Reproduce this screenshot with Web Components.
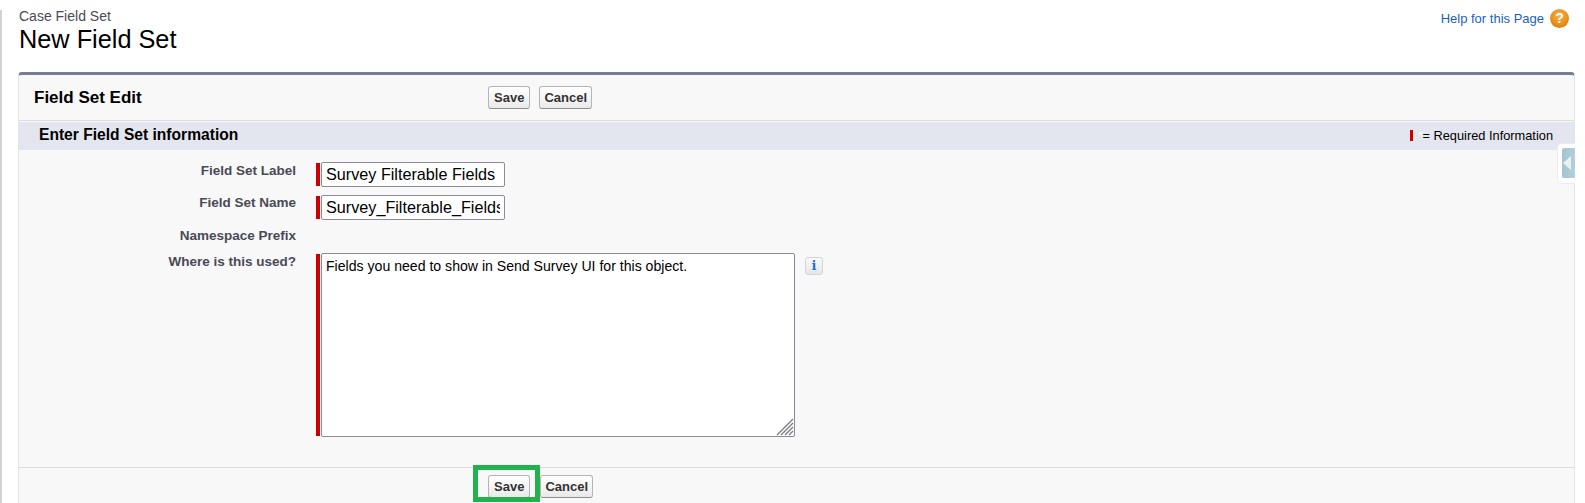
<!DOCTYPE html>
<html lang="en">
<head>
<meta charset="utf-8">
<title>New Field Set</title>
<style>
  html, body { margin: 0; height: 100%; overflow: hidden; background: #fff; }
  body { font-family: "Liberation Sans", Arial, sans-serif; }
</style>
</head>
<body>
<sf-page>
  <sf-page-header eyebrow="Case Field Set" heading="New Field Set" help="Help for this Page"></sf-page-header>
  <sf-panel>
    <sf-button-bar heading="Field Set Edit">
      <sf-button>Save</sf-button>
      <sf-button tight>Cancel</sf-button>
    </sf-button-bar>
    <sf-section-head heading="Enter Field Set information"></sf-section-head>
    <sf-form-body>
      <sf-field label="Field Set Label" required style="--label-top: 1px">
        <sf-text-input value="Survey Filterable Fields"></sf-text-input>
      </sf-field>
      <sf-field label="Field Set Name" required>
        <sf-text-input value="Survey_Filterable_Fields"></sf-text-input>
      </sf-field>
      <sf-field label="Namespace Prefix"></sf-field>
      <sf-field label="Where is this used?" required style="--label-top: 1px">
        <sf-text-area value="Fields you need to show in Send Survey UI for this object."></sf-text-area>
        <sf-info-button slot="after"></sf-info-button>
      </sf-field>
    </sf-form-body>
    <sf-button-bar footer>
      <sf-highlight><sf-button>Save</sf-button></sf-highlight>
      <sf-button tight>Cancel</sf-button>
    </sf-button-bar>
    <sf-flap slot="overlay"></sf-flap>
  </sf-panel>
</sf-page>

<script>
// petit helper pour eviter de repeter attachShadow partout
class SfBase extends HTMLElement {
    constructor() {
        super();
        this.attachShadow({ mode: 'open' });
    }
    connectedCallback() {
        this.render();
    }
}

class SfPage extends SfBase {
    render() {
        this.shadowRoot.innerHTML = `
            <style>
                :host { display: flex; height: 503px; box-sizing: border-box; }
                .strip { width: 2px; margin-top: 10px; background: #d2d2d2; flex: none; }
                .content { flex: 1; min-width: 0; display: flex; flex-direction: column; padding: 0 10px 0 16px; }
            </style>
            <div class="strip"></div>
            <div class="content"><slot></slot></div>
        `;
    }
}

class SfPageHeader extends SfBase {
    render() {
        this.shadowRoot.innerHTML = `
            <style>
                :host { display: flex; justify-content: space-between; align-items: flex-start; height: 72px; flex: none; padding-left: 1px; }
                .eyebrow { font-size: 14px; line-height: 15px; color: #4a4a56; padding-top: 9px; }
                h1 { margin: 0; font-size: 25.3px; font-weight: normal; line-height: 30px; color: #000; }
                .help { display: flex; align-items: center; gap: 6px; padding: 9px 6px 0 0; font-size: 13px; color: #1b5fbe; }
                .qmark {
                    width: 19px; height: 19px; border-radius: 50%;
                    background: radial-gradient(circle at 50% 35%, #f6b34a, #e58a14 65%, #b96a0c);
                    color: #fff; font-size: 14px; font-weight: bold; line-height: 19px; text-align: center;
                }
            </style>
            <div>
                <div class="eyebrow">${this.getAttribute('eyebrow')}</div>
                <h1>${this.getAttribute('heading')}</h1>
            </div>
            <div class="help"><span>${this.getAttribute('help')}</span><span class="qmark">?</span></div>
        `;
    }
}

class SfPanel extends SfBase {
    render() {
        this.shadowRoot.innerHTML = `
            <style>
                :host {
                    display: block; position: relative; flex: 1; box-sizing: border-box;
                    background: #f8f8f8;
                    border: 1px solid #e4e4e4; border-top: 3px solid #747e96; border-bottom: 0;
                    border-radius: 4px 4px 0 0;
                }
            </style>
            <slot></slot>
            <slot name="overlay"></slot>
        `;
    }
}

class SfButtonBar extends SfBase {
    render() {
        const heading = this.getAttribute('heading') || '';
        this.shadowRoot.innerHTML = `
            <style>
                :host { display: flex; align-items: center; height: 45px; box-sizing: border-box; padding-left: 15px; }
                :host([footer]) { height: auto; padding-top: 7px; border-top: 1px solid #dcdcdc; align-items: flex-start; }
                h2 { margin: 0; width: 454px; flex: none; font-size: 17px; font-weight: bold; color: #000; }
                .buttons { display: flex; gap: 9px; }
                :host([footer]) .buttons { gap: 10px; }
            </style>
            <h2>${heading}</h2>
            <div class="buttons"><slot></slot></div>
        `;
    }
}

class SfButton extends SfBase {
    render() {
        this.shadowRoot.innerHTML = `
            <style>
                :host { display: block; }
                button {
                    display: block; height: 23px; padding: 0 5px; margin: 0;
                    font: bold 13px "Liberation Sans", Arial, sans-serif; color: #333;
                    background: linear-gradient(#ffffff, #f3f3f3 60%, #e9e9e9);
                    border: 1px solid #b5b5b5; border-bottom-color: #8f8f8f; border-radius: 3px;
                }
                :host([tight]) button { padding: 0 4px; }
            </style>
            <button type="button"><slot></slot></button>
        `;
    }
}

class SfHighlight extends SfBase {
    render() {
        this.shadowRoot.innerHTML = `
            <style>
                :host { display: block; position: relative; }
                .box {
                    position: absolute; left: -15px; top: -10px; width: 67px; height: 37px;
                    box-sizing: border-box; border: 5px solid #22b14c; pointer-events: none;
                }
            </style>
            <slot></slot>
            <div class="box"></div>
        `;
    }
}

class SfSectionHead extends SfBase {
    render() {
        this.shadowRoot.innerHTML = `
            <style>
                :host {
                    display: flex; justify-content: space-between; align-items: center;
                    height: 28px; margin-top: 2px; padding: 0 21px 2px 20px; background: #e3e6ef;
                    position: relative; box-sizing: border-box;
                }
                :host::before { content: ""; position: absolute; left: 0; right: 0; top: -2px; height: 1px; background: #dcdcdc; }
                h3 { margin: 0; font-size: 15.6px; font-weight: bold; color: #000; }
                .legend { display: flex; align-items: center; font-size: 12.8px; color: #000; }
                .bar { width: 3px; height: 11px; background: #c00; margin-right: 5px; }
                .star { color: #fff; font-size: 9px; width: 4px; }
            </style>
            <h3>${this.getAttribute('heading')}</h3>
            <div class="legend"><span class="bar"></span><span class="star">*</span><span>= Required Information</span></div>
        `;
    }
}

class SfFormBody extends SfBase {
    render() {
        this.shadowRoot.innerHTML = `
            <style>
                :host { display: flex; flex-direction: column; height: 317px; box-sizing: border-box; padding-top: 12px; }
            </style>
            <slot></slot>
        `;
    }
}

class SfField extends SfBase {
    render() {
        const required = this.hasAttribute('required');
        this.shadowRoot.innerHTML = `
            <style>
                :host { display: grid; grid-template-columns: 278px auto 1fr; margin-bottom: 8px; min-height: 17px; }
                .label { text-align: right; font-size: 13.5px; font-weight: bold; color: #4a4a56; line-height: 15px; padding: var(--label-top, 0) 1px 0 0; }
                .control { display: flex; gap: 1px; margin-left: 19px; }
                .req { width: 4px; margin: 1px 0; background: ${required ? '#c00' : 'transparent'}; flex: none; }
                .after { padding: 3px 0 0 10px; }
            </style>
            <div class="label">${this.getAttribute('label')}</div>
            <div class="control"><span class="req"></span><slot></slot></div>
            <div class="after"><slot name="after"></slot></div>
        `;
    }
}

class SfTextInput extends SfBase {
    render() {
        this.shadowRoot.innerHTML = `
            <style>
                :host { display: block; }
                input {
                    display: block; width: 184px; height: 25px; box-sizing: border-box; margin: 0; padding: 1px 4px;
                    font: 16.2px "Liberation Sans", Arial, sans-serif; color: #000;
                    background: #fff; border: 1px solid #8b8b99; border-radius: 2px; outline: none;
                }
            </style>
            <input type="text" value="${this.getAttribute('value')}">
        `;
    }
}

class SfTextArea extends SfBase {
    render() {
        this.shadowRoot.innerHTML = `
            <style>
                :host { display: block; position: relative; }
                textarea {
                    display: block; width: 474px; height: 184px; box-sizing: border-box; margin: 0; padding: 4px 4px;
                    font: 14.1px "Liberation Sans", Arial, sans-serif; color: #000;
                    background: #fff; border: 1px solid #8b8b99; border-radius: 2px; outline: none; resize: none;
                }
                svg { position: absolute; right: 1px; bottom: 1px; }
            </style>
            <textarea>${this.getAttribute('value')}</textarea>
            <svg width="18" height="18" viewBox="0 0 18 18" stroke="#7d7d86" stroke-width="1.4">
                <path d="M1 17 17 1M5 17 17 5M9 17 17 9M13 17 17 13"/>
            </svg>
        `;
    }
}

class SfInfoButton extends SfBase {
    render() {
        this.shadowRoot.innerHTML = `
            <style>
                :host { display: inline-block; }
                div {
                    width: 18px; height: 18px; box-sizing: border-box; border-radius: 3px;
                    border: 1px solid #d5d5d8; background: linear-gradient(#fafafa, #e6e6ea);
                    font: bold 13px/16px "DejaVu Serif", "Liberation Serif", serif; color: #1e73c9; text-align: center;
                }
            </style>
            <div>i</div>
        `;
    }
}

class SfFlap extends SfBase {
    render() {
        this.shadowRoot.innerHTML = `
            <style>
                :host {
                    position: absolute; right: -1px; top: 68px; width: 18px; height: 41px; box-sizing: border-box;
                    background: #fff; border: 1px solid #ececec; border-right: 0;
                    border-radius: 5px 0 0 5px; padding: 4px 0 5px 4px;
                }
                div { height: 100%; background: linear-gradient(90deg, #a4c4d0, #b4d0da); display: flex; align-items: center; padding-left: 1px; border-radius: 2px 0 0 2px; }
                svg { display: block; }
            </style>
            <div><svg width="8" height="14" viewBox="0 0 8 14"><path d="M8 0v14L0 7z" fill="#e9f1f4"/></svg></div>
        `;
    }
}

customElements.define('sf-page', SfPage);
customElements.define('sf-page-header', SfPageHeader);
customElements.define('sf-panel', SfPanel);
customElements.define('sf-button-bar', SfButtonBar);
customElements.define('sf-button', SfButton);
customElements.define('sf-highlight', SfHighlight);
customElements.define('sf-section-head', SfSectionHead);
customElements.define('sf-form-body', SfFormBody);
customElements.define('sf-field', SfField);
customElements.define('sf-text-input', SfTextInput);
customElements.define('sf-text-area', SfTextArea);
customElements.define('sf-info-button', SfInfoButton);
customElements.define('sf-flap', SfFlap);
</script>
</body>
</html>
